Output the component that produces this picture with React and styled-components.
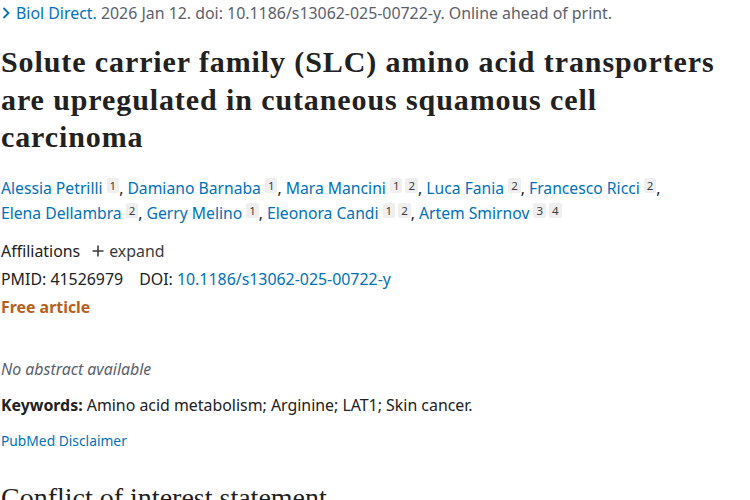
import React from "react";
import styled, { createGlobalStyle } from "styled-components";

const Global = createGlobalStyle`
  body {
    margin: 0;
    background: #fff;
    font-family: "Noto Sans", "Open Sans", sans-serif;
    color: #212121;
  }
`;

const Page = styled.main`
  width: 750px;
  height: 500px;
  overflow: hidden;
  padding: 0 0 0 1px;
  box-sizing: border-box;
`;

const Citation = styled.div`
  display: flex;
  align-items: center;
  gap: 5px;
  font-size: 15.9px;
  line-height: 26px;
  color: #5b616b;
`;

const Link = styled.a`
  color: #0071bc;
  text-decoration: none;
`;

const Title = styled.h1`
  font-family: "Liberation Serif", "Times New Roman", serif;
  font-weight: 700;
  font-size: 30px;
  line-height: 37.5px;
  letter-spacing: 0.9px;
  color: #212121;
  margin: 17px 0 0;
  max-width: 740px;
`;

const Authors = styled.div`
  margin-top: 20px;
  font-size: 15.7px;
  line-height: 25px;
  color: #212121;
`;

const Badge = styled.sup`
  display: inline-block;
  font-size: 11.5px;
  line-height: 15px;
  padding: 0 3px;
  margin-left: ${(p) => (p.first ? "4px" : "3px")};
  background: #efefef;
  color: #3c3c3c;
  border-radius: 2px;
  vertical-align: 4px;
`;

const Row = styled.div`
  font-size: 15.9px;
  line-height: 28px;
  color: #212121;
  display: flex;
  align-items: center;
  gap: ${(p) => p.gap || "0"};
  margin-top: ${(p) => p.mt || "0"};
`;

const Expand = styled.span`
  display: inline-flex;
  align-items: center;
  gap: 5px;
  color: #3c3c3c;
`;

const Free = styled.div`
  font-size: 15.9px;
  line-height: 28px;
  font-weight: 700;
  color: #b95f1d;
`;

const NoAbstract = styled.p`
  font-style: italic;
  font-size: 15.9px;
  line-height: 24px;
  color: #5b616b;
  margin: 36px 0 0;
`;

const Keywords = styled.p`
  font-size: 15.9px;
  line-height: 24px;
  margin: 12px 0 0;
  strong {
    font-weight: 700;
  }
`;

const Disclaimer = styled.p`
  font-size: 13.8px;
  line-height: 20px;
  margin: 14px 0 0;
`;

const Section = styled.h2`
  font-family: "Liberation Serif", "Times New Roman", serif;
  font-weight: 400;
  font-size: 28px;
  line-height: 30px;
  margin: 32px 0 0;
  color: #212121;
`;

const authors = [
  ["Alessia Petrilli", [1]],
  ["Damiano Barnaba", [1]],
  ["Mara Mancini", [1, 2]],
  ["Luca Fania", [2]],
  ["Francesco Ricci", [2]],
  ["Elena Dellambra", [2]],
  ["Gerry Melino", [1]],
  ["Eleonora Candi", [1, 2]],
  ["Artem Smirnov", [3, 4]],
];

const Chevron = () => (
  <svg width="10" height="14" viewBox="0 0 10 14">
    <path d="M2.5 2 L7.5 7 L2.5 12" fill="none" stroke="#0071bc" strokeWidth="1.8" />
  </svg>
);

const Plus = () => (
  <svg width="12" height="12" viewBox="0 0 12 12">
    <path d="M6 0.5 V11.5 M0.5 6 H11.5" stroke="#3c3c3c" strokeWidth="1.6" />
  </svg>
);

export default function App() {
  return (
    <>
      <Global />
      <Page>
        <Citation>
          <Chevron />
          <span>
            <Link href="#">Biol Direct.</Link> 2026 Jan 12. doi: 10.1186/s13062-025-00722-y. Online ahead of print.
          </span>
        </Citation>
        <Title>
          Solute carrier family (SLC) amino acid transporters are upregulated in cutaneous squamous cell carcinoma
        </Title>
        <Authors>
          {authors.map(([name, refs], i) => (
            <React.Fragment key={name}>
              <Link href="#">{name}</Link>
              {refs.map((r, j) => (
                <Badge key={r} first={j === 0}>{r}</Badge>
              ))}
              {i < authors.length - 1 ? ", " : ""}
              {i === 4 ? <br /> : null}
            </React.Fragment>
          ))}
        </Authors>
        <Row mt="11px" gap="12px">
          <span>Affiliations</span>
          <Expand>
            <Plus />
            expand
          </Expand>
        </Row>
        <Row gap="16px">
          <span>PMID: 41526979</span>
          <span>
            DOI: <Link href="#">10.1186/s13062-025-00722-y</Link>
          </span>
        </Row>
        <Free>Free article</Free>
        <NoAbstract>No abstract available</NoAbstract>
        <Keywords>
          <strong>Keywords:</strong> Amino acid metabolism; Arginine; LAT1; Skin cancer.
        </Keywords>
        <Disclaimer>
          <Link href="#">PubMed Disclaimer</Link>
        </Disclaimer>
        <Section>Conflict of interest statement</Section>
      </Page>
    </>
  );
}
